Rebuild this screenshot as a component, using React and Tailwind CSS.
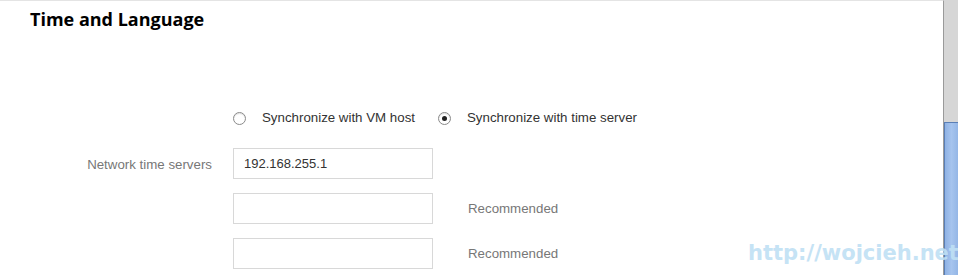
import React from 'react';

const Radio = ({ checked, label }) => (
  <label className="flex items-center gap-4">
    <span className="w-[13px] h-[13px] rounded-full border border-[#8a8a8a] bg-white flex items-center justify-center shadow-[inset_0_1px_1px_rgba(0,0,0,0.12)]">
      {checked && <span className="w-[5px] h-[5px] rounded-full bg-[#222]" />}
    </span>
    <span className="text-[13.3px] text-[#333]">{label}</span>
  </label>
);

const Field = ({ value, hint }) => (
  <div className="flex items-center">
    <div className="w-[200px] h-[31px] border border-[#d8d8d8] bg-white px-[10px] flex items-center text-[13px] text-[#333]">
      {value}
    </div>
    {hint && <span className="ml-[35px] text-[13.3px] text-[#777]">{hint}</span>}
  </div>
);

export default function App() {
  return (
    <div className="w-[958px] h-[275px] flex bg-white overflow-hidden relative" style={{ fontFamily: '"Liberation Sans", Arial, sans-serif' }}>
      {/* Main panel */}
      <div className="flex-1 border-t border-[#e4e4e4] border-r border-r-[#9a9a9a]">
        <h1 className="pl-[30px] pt-[6px] text-[18px] font-bold text-black leading-[24px]" style={{ fontFamily: '"Open Sans", "DejaVu Sans", sans-serif' }}>
          Time and Language
        </h1>

        <div className="mt-[77px] pl-[233px] flex items-center gap-[23px] h-[20px]">
          <Radio label="Synchronize with VM host" />
          <Radio checked label="Synchronize with time server" />
        </div>

        <div className="mt-[20px] flex">
          <div className="w-[212px] text-right text-[13.3px] text-[#777] pt-[7px]">Network time servers</div>
          <div className="ml-[21px] flex flex-col gap-[14px]">
            <Field value="192.168.255.1" />
            <Field hint="Recommended" />
            <Field hint="Recommended" />
          </div>
        </div>
      </div>

      {/* Scrollbar */}
      <div className="w-[14px] flex flex-col">
        <div className="h-[122px] bg-[#d6d6d6]" />
        <div className="flex-1 border-l border-t border-[#5a7fb6] bg-gradient-to-r from-[#8fb2e4] via-[#a6c4ee] to-[#94b6e6]" />
      </div>

      {/* Watermark */}
      <div className="absolute left-[748px] top-[239px] text-[21px] leading-[28px] font-bold text-[#bfe0f4] opacity-90 whitespace-nowrap" style={{ fontFamily: '"DejaVu Sans", sans-serif' }}>
        http://wojcieh.net
      </div>
    </div>
  );
}
